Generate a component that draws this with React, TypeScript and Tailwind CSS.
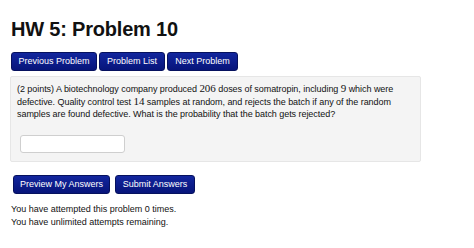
import React from "react";

const btn =
  "h-[19px] rounded-[3px] border border-[#06115e] bg-gradient-to-b from-[#12269e] to-[#07147a] text-white text-[9px] leading-none flex items-center justify-center whitespace-nowrap";

const num = "font-['Liberation_Serif',serif] text-[11px] leading-none";

export default function App() {
  return (
    <div className="w-[474px] h-[248px] bg-white text-[#111] font-['Liberation_Sans',Arial,sans-serif] overflow-hidden">
      <div className="pl-[11px] pt-[17px]">
        <h1 className="text-[20px] font-bold leading-[24px] tracking-[-0.2px]">HW 5: Problem 10</h1>
        <div className="flex gap-[2px] mt-[11px]">
          <button className={btn + " w-[86px]"}>Previous Problem</button>
          <button className={btn + " w-[66px]"}>Problem List</button>
          <button className={btn + " w-[71px]"}>Next Problem</button>
        </div>
        <div className="mt-[5px] w-[411px] h-[86px] -ml-[1px] bg-[#f4f4f4] border border-[#e6e6e6] rounded-[2px] pl-[6px] pr-[4px] pt-[6px]">
          <p className="text-[9px] leading-[12.5px] tracking-[-0.05px]">
            (2 points) A biotechnology company produced{" "}
            <span className={num}>206</span> doses of somatropin, including{" "}
            <span className={num}>9</span> which were defective. Quality control test{" "}
            <span className={num}>14</span> samples at random, and rejects the batch if any of the random samples are found defective. What is the probability that the batch gets rejected?
          </p>
          <div className="mt-[14px] ml-[3px] w-[105px] h-[18px] bg-white border border-[#cfcfcf] rounded-[3px]"></div>
        </div>
        <div className="flex gap-[5px] mt-[13px] ml-[2px]">
          <button className={btn + " w-[97px]"}>Preview My Answers</button>
          <button className={btn + " w-[80px]"}>Submit Answers</button>
        </div>
        <div className="mt-[9px] text-[9px] leading-[12.5px]">
          <div>You have attempted this problem 0 times.</div>
          <div>You have unlimited attempts remaining.</div>
        </div>
      </div>
    </div>
  );
}
